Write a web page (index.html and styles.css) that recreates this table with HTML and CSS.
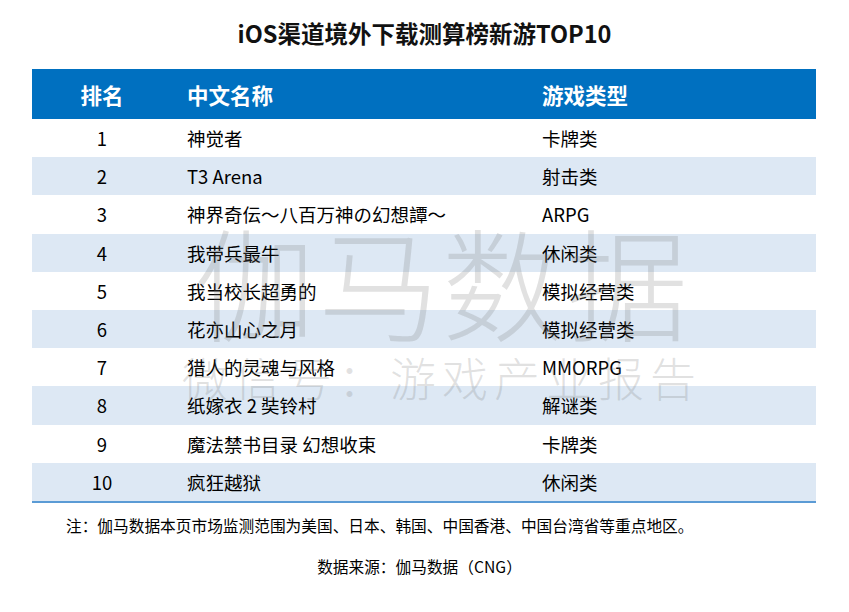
FILE: index.html
```html
<!DOCTYPE html>
<html lang="zh-CN">
<head>
<meta charset="utf-8">
<title>iOS渠道境外下载测算榜新游TOP10</title>
<link rel="stylesheet" href="styles.css">
</head>
<body>
<div class="page">
  <h1 class="title">iOS渠道境外下载测算榜新游TOP10</h1>
  <div class="table">
    <div class="row head">
      <div class="c rank">排名</div>
      <div class="c name">中文名称</div>
      <div class="c type">游戏类型</div>
    </div>
    <div class="row"><div class="c rank">1</div><div class="c name">神觉者</div><div class="c type">卡牌类</div></div>
    <div class="row alt"><div class="c rank">2</div><div class="c name">T3 Arena</div><div class="c type">射击类</div></div>
    <div class="row"><div class="c rank">3</div><div class="c name">神界奇伝～八百万神の幻想譚～</div><div class="c type">ARPG</div></div>
    <div class="row alt"><div class="c rank">4</div><div class="c name">我带兵最牛</div><div class="c type">休闲类</div></div>
    <div class="row"><div class="c rank">5</div><div class="c name">我当校长超勇的</div><div class="c type">模拟经营类</div></div>
    <div class="row alt"><div class="c rank">6</div><div class="c name">花亦山心之月</div><div class="c type">模拟经营类</div></div>
    <div class="row"><div class="c rank">7</div><div class="c name">猎人的灵魂与风格</div><div class="c type">MMORPG</div></div>
    <div class="row alt"><div class="c rank">8</div><div class="c name">纸嫁衣 2 奘铃村</div><div class="c type">解谜类</div></div>
    <div class="row"><div class="c rank">9</div><div class="c name">魔法禁书目录 幻想收束</div><div class="c type">卡牌类</div></div>
    <div class="row alt last"><div class="c rank">10</div><div class="c name">疯狂越狱</div><div class="c type">休闲类</div></div>
    <div class="watermark">
      <div class="wm-big">伽马数据</div>
      <div class="wm-small">微信号：游戏产业报告</div>
    </div>
  </div>
  <p class="note">注：伽马数据本页市场监测范围为美国、日本、韩国、中国香港、中国台湾省等重点地区。</p>
  <p class="source">数据来源：伽马数据（CNG）</p>
</div>
</body>
</html>
```
FILE: styles.css
```css
* { box-sizing: border-box; }
html, body { margin: 0; padding: 0; background: #fff; }
body {
  font-family: "Noto Sans CJK SC", "Noto Sans", sans-serif;
  color: #000;
  width: 849px;
  height: 612px;
  overflow: hidden;
}
.page { padding-top: 18px; }
.title {
  margin: 0;
  font-size: 23.5px;
  line-height: 30px;
  font-weight: 700;
  text-align: center;
  color: #111;
}
.table {
  position: relative;
  margin: 21px 0 0 32px;
  width: 784px;
}
.row {
  display: grid;
  grid-template-columns: 140px 355px 1fr;
  height: 38.2px;
  align-items: center;
  font-size: 18.5px;
}
.row.alt { background: #dde8f4; }
.row.last { border-bottom: 2px solid #5b9bd5; height: 40.2px; }
.row.head {
  height: 50px;
  background: #0070c0;
  color: #fff;
  font-weight: 700;
  font-size: 21.5px;
}
.c { white-space: nowrap; }
.rank { text-align: center; }
.name, .type { padding-left: 15px; }
.watermark {
  position: absolute;
  left: 150px;
  top: 140px;
  width: 520px;
  pointer-events: none;
  color: rgba(120, 120, 120, 0.22);
  text-align: center;
  font-weight: 300;
}
.wm-big {
  font-size: 122px;
  line-height: 140px;
  letter-spacing: 2px;
}
.wm-small {
  font-size: 46px;
  line-height: 50px;
  letter-spacing: 6px;
  margin-top: 2px;
}
.note {
  margin: 12px 0 0 66px;
  font-size: 15.7px;
  line-height: 22px;
}
.source {
  margin: 19px 0 0;
  font-size: 15.7px;
  line-height: 22px;
  text-align: center;
  padding-right: 10px;
}
```
